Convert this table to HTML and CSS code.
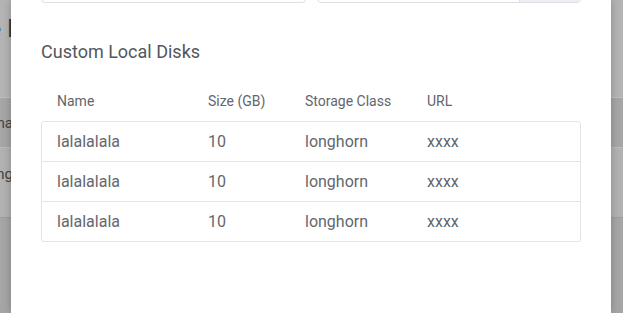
FILE: index.html
```html
<!DOCTYPE html>
<html lang="en">
<head>
    <meta charset="UTF-8">
    <title>Custom Local Disks</title>
    <link rel="stylesheet" href="styles.css">
</head>
<body>
    <!-- page behind the modal -->
    <div class="page">
        <div class="band band-head"><span class="clip"><span class="page-title">Storage le l</span></span></div>
        <div class="band band-dark"><span class="clip"><span class="page-text">Schema</span></span></div>
        <div class="band band-light"><span class="clip"><span class="page-text">longhorn lang</span></span></div>
        <div class="band band-dark band-rest"></div>
    </div>

    <div class="backdrop">
        <div class="modal">
            <div class="input-row">
                <div class="input"></div>
                <div class="input input-addon"><span class="addon"></span></div>
            </div>

            <h2 class="section-title">Custom Local Disks</h2>

            <div class="disk-table">
                <div class="disk-head">
                    <span>Name</span>
                    <span>Size (GB)</span>
                    <span>Storage Class</span>
                    <span>URL</span>
                </div>
                <div class="disk-body">
                    <div class="disk-row">
                        <span>lalalalala</span>
                        <span>10</span>
                        <span>longhorn</span>
                        <span>xxxx</span>
                    </div>
                    <div class="disk-row">
                        <span>lalalalala</span>
                        <span>10</span>
                        <span>longhorn</span>
                        <span>xxxx</span>
                    </div>
                    <div class="disk-row">
                        <span>lalalalala</span>
                        <span>10</span>
                        <span>longhorn</span>
                        <span>xxxx</span>
                    </div>
                </div>
            </div>
        </div>
    </div>
</body>
</html>
```

FILE: styles.css
```css
body {
    margin: 0;
    padding: 0;
    font-family: Roboto, "Liberation Sans", Arial, sans-serif;
    overflow: hidden;
    height: 313px;
    position: relative;
}
.page {
    display: flex;
    flex-direction: column;
    height: 313px;
}
.band {
    display: flex;
    align-items: center;
}
.band-head {
    height: 98px;
    background-color: #b4b4b4;
    align-items: flex-start;
    padding-top: 15px;
    box-sizing: border-box;
    border-bottom: 1px solid #c0c0c0;
}
.band-dark {
    background-color: #a6a6a6;
    height: 49px;
}
.band-light {
    background-color: #b2b2b2;
    height: 70px;
    border-top: 1px solid #bcbcbc;
    align-items: flex-start;
    padding-top: 17px;
    box-sizing: border-box;
}
.band-rest {
    flex: 1;
    border-top: 1px solid #9e9e9e;
}
.clip {
    width: 13px;
    overflow: hidden;
    display: flex;
    justify-content: flex-end;
    white-space: nowrap;
}
.page-title {
    font-size: 24px;
    color: #3a3a3a;
}
.page-text {
    font-size: 15px;
    line-height: 18px;
    color: #454545;
}
.backdrop {
    position: absolute;
    top: 0;
    left: 0;
    right: 0;
    bottom: 0;
    padding-left: 11px;
}
.modal {
    width: 600px;
    height: 313px;
    background-color: #fff;
    box-shadow: 0 0 8px rgba(0, 0, 0, 0.25);
    padding: 0 30px;
    box-sizing: border-box;
    overflow: hidden;
}
.input-row {
    display: flex;
    gap: 11px;
    margin-top: -30px;
    height: 33px;
}
.input {
    flex: 1;
    border: 1px solid #dcdfe3;
    border-radius: 4px;
    display: flex;
    justify-content: flex-end;
    overflow: hidden;
}
.addon {
    width: 60px;
    background-color: #eceef1;
    border-left: 1px solid #dcdfe3;
}
.section-title {
    margin: 39px 0 0 0;
    font-size: 18px;
    font-weight: 400;
    color: #52575e;
    line-height: 20px;
}
.disk-head {
    display: grid;
    grid-template-columns: 151px 97px 122px 1fr;
    padding: 0 16px;
    margin-top: 32px;
    height: 27px;
    line-height: 15px;
    font-size: 14px;
    color: #62666c;
}
.disk-body {
    border: 1px solid #e1e3e6;
    border-radius: 3px;
}
.disk-row {
    display: grid;
    grid-template-columns: 151px 97px 122px 1fr;
    padding: 0 15px;
    height: 39px;
    align-items: center;
    font-size: 16px;
    color: #63676e;
    border-top: 1px solid #e1e3e6;
}
.disk-row:first-child {
    border-top: none;
}
```
